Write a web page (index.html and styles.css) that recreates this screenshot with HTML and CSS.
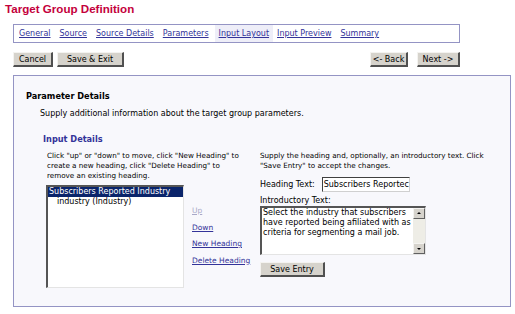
FILE: index.html
```html
<!DOCTYPE html>
<html>
<head>
<meta charset="utf-8">
<link rel="stylesheet" href="styles.css">
</head>
<body>
<h1 class="title">Target Group Definition</h1>
<nav class="tabs">
  <a class="tab">General</a>
  <a class="tab">Source</a>
  <a class="tab">Source Details</a>
  <a class="tab">Parameters</a>
  <a class="tab current">Input Layout</a>
  <a class="tab">Input Preview</a>
  <a class="tab">Summary</a>
</nav>
<div class="toolbar">
  <div class="group">
    <span class="btn w-cancel">Cancel</span>
    <span class="btn w-saveexit">Save &amp; Exit</span>
  </div>
  <div class="group">
    <span class="btn w-back">&lt;- Back</span>
    <span class="btn w-next">Next -&gt;</span>
  </div>
</div>
<section class="panel">
  <h2 class="panel-title">Parameter Details</h2>
  <p class="intro">Supply additional information about the target group parameters.</p>
  <h3 class="sub-title">Input Details</h3>
  <div class="cols">
    <div class="left">
      <p class="help help-left">Click "up" or "down" to move, click "New Heading" to create a new heading, click "Delete Heading" to remove an existing heading.</p>
      <div class="list-row">
        <div class="listbox">
          <div class="opt selected">Subscribers Reported Industry</div>
          <div class="opt child">industry (Industry)</div>
        </div>
        <div class="actions">
          <span class="act disabled">Up</span>
          <a class="act">Down</a>
          <a class="act">New Heading</a>
          <a class="act">Delete Heading</a>
        </div>
      </div>
    </div>
    <div class="right">
      <p class="help help-right">Supply the heading and, optionally, an introductory text. Click "Save Entry" to accept the changes.</p>
      <div class="field-row">
        <span class="label">Heading Text:</span>
        <div class="input"><span>Subscribers Reportec</span></div>
      </div>
      <div class="label label-block">Introductory Text:</div>
      <div class="textarea">
        <div class="ta-text">Select the industry that subscribers have reported being afiliated with as criteria for segmenting a mail job.</div>
        <div class="scroll">
          <span class="arrow up"></span>
          <span class="track"></span>
          <span class="arrow down"></span>
        </div>
      </div>
      <span class="btn w-saveentry">Save Entry</span>
    </div>
  </div>
</section>
</body>
</html>
```
FILE: styles.css
```css
html, body {
  margin: 0;
  padding: 0;
  background: #ffffff;
}
body {
  font-family: "DejaVu Sans", Verdana, sans-serif;
  font-size: 8px;
  color: #000000;
  width: 515px;
  height: 314px;
  overflow: hidden;
}
.title {
  margin: 0;
  padding: 2px 0 0 5px;
  height: 22px;
  box-sizing: border-box;
  font-family: "Liberation Sans", Arial, sans-serif;
  font-size: 11.6px;
  font-weight: bold;
  color: #c4003c;
  line-height: 14px;
}
.tabs {
  margin: 2px 0 0 13px;
  width: 441px;
  height: 17px;
  border: 1px solid #9494c4;
  display: flex;
  align-items: stretch;
  padding-left: 4px;
  box-sizing: content-box;
}
.tab {
  color: #333399;
  text-decoration: underline;
  display: flex;
  align-items: center;
  padding: 0 4px 0 1px;
  margin-right: 4px;
}
.tab.current {
  background: #eeeef8;
  padding: 0 4px;
  margin-left: -2px;
  margin-right: 3px;
}
.toolbar {
  margin: 9px 0 0 13px;
  width: 447px;
  display: flex;
  justify-content: space-between;
}
.group {
  display: flex;
  gap: 4px;
}
.group:last-child {
  gap: 9px;
}
.btn {
  display: inline-flex;
  align-items: center;
  justify-content: center;
  height: 15px;
  box-sizing: border-box;
  background: #d6d3cc;
  border-top: 1px solid #f4f3f0;
  border-left: 1px solid #f4f3f0;
  border-right: 2px solid #505050;
  border-bottom: 2px solid #505050;
  color: #000000;
  font-size: 8px;
}
.w-cancel { width: 40px; }
.w-saveexit { width: 67px; }
.w-back { width: 38px; }
.w-next { width: 43px; }
.w-saveentry { width: 65px; margin-top: 7px; }
.panel {
  margin: 8px 0 0 13px;
  width: 498px;
  height: 232px;
  box-sizing: border-box;
  border: 1px solid #9494c4;
  background: #f8f8fc;
  padding: 14px 0 0 12px;
}
.panel-title {
  margin: 0;
  font-size: 8.2px;
  font-weight: bold;
  line-height: 12px;
}
.intro {
  margin: 6px 0 0 14px;
  line-height: 11px;
}
.sub-title {
  margin: 14px 0 0 17px;
  font-size: 8.2px;
  font-weight: bold;
  color: #333399;
  line-height: 12px;
}
.cols {
  display: flex;
  margin: 6px 0 0 21px;
}
.left {
  width: 213px;
}
.help {
  margin: 0;
  line-height: 10px;
  font-size: 7.2px;
}
.help-left {
  width: 200px;
}
.list-row {
  display: flex;
  margin-top: 4px;
  margin-left: -1px;
}
.listbox {
  width: 138px;
  height: 103px;
  box-sizing: border-box;
  background: #ffffff;
  border-top: 2px solid #555555;
  border-left: 2px solid #555555;
  border-right: 1px solid #e4e4e4;
  border-bottom: 1px solid #e4e4e4;
}
.opt {
  line-height: 10px;
  height: 10px;
  padding-left: 1px;
  white-space: nowrap;
}
.opt.selected {
  background: #0a246a;
  color: #ffffff;
}
.opt.child {
  padding-left: 9px;
}
.actions {
  display: flex;
  flex-direction: column;
  margin: 21px 0 0 8px;
  gap: 6.5px;
}
.act {
  color: #333399;
  text-decoration: underline;
  line-height: 10px;
  font-size: 7.5px;
}
.act.disabled {
  color: #a8a8c8;
}
.right {
  width: 232px;
}
.help-right {
  width: 232px;
}
.field-row {
  display: flex;
  align-items: center;
  margin-top: 6px;
  gap: 7px;
}
.label {
  line-height: 10px;
}
.input {
  width: 88px;
  height: 15px;
  box-sizing: border-box;
  background: #ffffff;
  border-top: 1px solid #404040;
  border-left: 1px solid #404040;
  border-right: 1px solid #d0d0d0;
  border-bottom: 1px solid #d0d0d0;
  overflow: hidden;
  white-space: nowrap;
  display: flex;
  align-items: center;
  padding-left: 1px;
}
.label-block {
  margin-top: 4px;
}
.textarea {
  margin-top: 0;
  width: 166px;
  height: 49px;
  box-sizing: border-box;
  background: #ffffff;
  border-top: 2px solid #555555;
  border-left: 2px solid #555555;
  border-right: 1px solid #e4e4e4;
  border-bottom: 1px solid #e4e4e4;
  display: flex;
}
.ta-text {
  flex: 1;
  line-height: 10px;
  padding: 0 2px 0 1px;
}
.scroll {
  width: 12px;
  display: flex;
  flex-direction: column;
  background: #eeede6;
}
.arrow {
  height: 11px;
  box-sizing: border-box;
  background: #d6d3cc;
  border-top: 1px solid #f4f3f0;
  border-left: 1px solid #f4f3f0;
  border-right: 1px solid #606060;
  border-bottom: 1px solid #606060;
  position: relative;
}
.arrow::after {
  content: "";
  position: absolute;
  left: 3px;
  width: 0;
  height: 0;
  border-left: 2px solid transparent;
  border-right: 2px solid transparent;
}
.arrow.up::after {
  top: 3px;
  border-bottom: 2px solid #000000;
}
.arrow.down::after {
  top: 4px;
  border-top: 2px solid #000000;
}
.track {
  flex: 1;
}
```
